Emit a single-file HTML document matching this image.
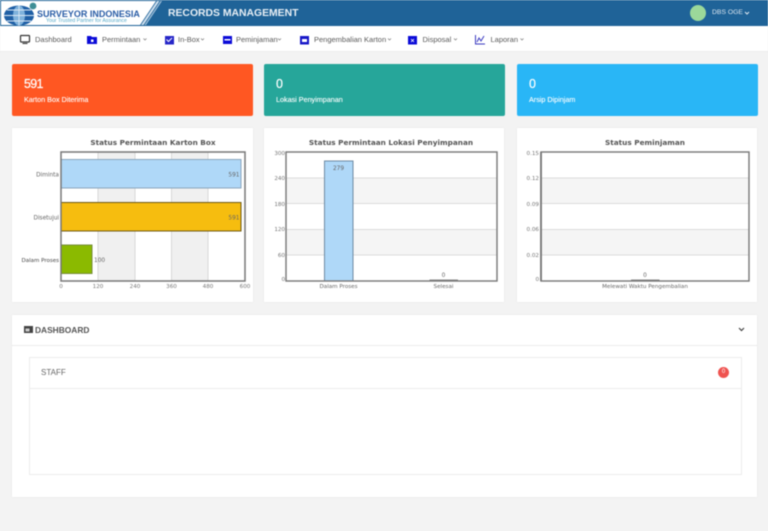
<!DOCTYPE html>
<html>
<head>
<meta charset="utf-8">
<style>
html,body{margin:0;padding:0;width:768px;height:531px;overflow:hidden;background:#f3f3f3;font-family:"Liberation Sans",sans-serif}
.a{position:absolute}
#root{position:relative;width:768px;height:531px;filter:blur(.45px);overflow:hidden}
.nav{position:absolute;top:33.500px;font-size:7.500px;line-height:11px;color:#5a5a5a;white-space:nowrap}
.stat{position:absolute;top:64px;height:52px;width:241px;border-radius:2px;color:#fff}
.stat b{position:absolute;left:12px;top:13px;font-size:12.500px;font-weight:400;line-height:15px;letter-spacing:-.7px;-webkit-text-stroke:.2px #fff}
.stat span{position:absolute;left:12px;top:29.500px;font-size:7.200px;line-height:11px;-webkit-text-stroke:.1px #fff}
.card{position:absolute;top:128px;height:174px;background:#fff;box-shadow:0 0 2px rgba(0,0,0,.06)}
svg text{font-family:"DejaVu Sans",sans-serif}
</style>
</head>
<body>
<div id="root">
<svg class="a" style="left:0;top:0" width="768" height="52">
<rect width="768" height="26" fill="#1f6398"/>
<rect y="26" width="768" height="25" fill="#fff"/>
<rect y="51" width="768" height="1" fill="#ececec"/>
<polygon points="1,1 156,1 140,25 1,25" fill="#fff"/>
<polygon points="157,1 159.500,1 143.500,25 141,25" fill="#cfe0ee"/>
<polygon points="160.500,1 162,1 146,25 144.500,25" fill="#9fc0da"/>
<ellipse cx="19" cy="15.500" rx="15" ry="10" fill="#1f5fa5"/>
<ellipse cx="19" cy="15.500" rx="6" ry="10" fill="#7fb2dc"/>
<path d="M4 15.500H34M7 10H31M7 21H31M19 5.500V25.500" stroke="#dbe8f4" stroke-width=".9" fill="none"/>
<circle cx="33" cy="6" r="3.400" fill="#3e8e96"/>
</svg>
<div class="a" style="left:37px;top:7.500px;font-size:9px;font-weight:700;color:#2a5da6;line-height:12px;white-space:nowrap">SURVEYOR INDONESIA</div>
<div class="a" style="left:46px;top:17.500px;font-size:5.200px;color:#55a8c8;line-height:6px;white-space:nowrap">Your Trusted Partner for Assurance</div>
<div class="a" style="left:168px;top:6.500px;font-size:10.400px;font-weight:700;color:#e8eff5;line-height:14px;white-space:nowrap">RECORDS MANAGEMENT</div>
<div class="a" style="left:690px;top:5px;width:16px;height:16px;border-radius:50%;background:#9bd89a"></div>
<div class="a" style="left:712px;top:8px;font-size:6.800px;color:#dbe6f0;line-height:10px;white-space:nowrap">DBS OGE</div>
<svg class="a" style="left:0;top:0" width="768" height="52" fill="none">
<path d="M745 12l2 2 2-2" stroke="#dfe8f0" stroke-width="1"/>
<rect x="20.500" y="35.500" width="9" height="6.500" rx=".6" stroke="#333" stroke-width="1.200"/>
<path d="M22.500 43.500h5" stroke="#333"/>
<path d="M87 36h4l1 1h5v7H87z" fill="#0b0bd8"/><rect x="91" y="39.500" width="2.500" height="2.500" fill="#fff"/>
<path d="M165 36h9v8.500h-9z" fill="#2626c8"/><path d="M166.500 39.500l2 2 3.500-3.500" stroke="#fff"/>
<path d="M223 36h9v8h-9z" fill="#0b0bd8"/><rect x="224.500" y="39" width="6" height="1.500" fill="#fff"/>
<path d="M300 36h9v8.500h-9z" fill="#1818c8"/><rect x="302" y="39" width="5" height="3" fill="#fff"/>
<path d="M408 36h9v8.500h-9z" fill="#0b0bd8"/><path d="M411 39l3 3M414 39l-3 3" stroke="#fff" stroke-width=".8"/>
<path d="M475.500 35v9h9.500" stroke="#3a3ac0"/><path d="M477 42l2-4 2 3 3-5" stroke="#3a3ac0"/>
<g stroke="#777" stroke-width=".7">
<path d="M143.500 38.500l1.500 1.500 1.500-1.500"/><path d="M201 38.500l1.500 1.500 1.500-1.500"/><path d="M278 38.500l1.500 1.500 1.500-1.500"/><path d="M388 38.500l1.500 1.500 1.500-1.500"/><path d="M454 38.500l1.500 1.500 1.500-1.500"/><path d="M520.500 38.500l1.500 1.500 1.500-1.500"/>
</g>
</svg>
<div class="nav" style="left:35px">Dashboard</div>
<div class="nav" style="left:102px">Permintaan</div>
<div class="nav" style="left:178px">In-Box</div>
<div class="nav" style="left:236px">Peminjaman</div>
<div class="nav" style="left:314px">Pengembalian Karton</div>
<div class="nav" style="left:422.500px">Disposal</div>
<div class="nav" style="left:490.500px">Laporan</div>

<div class="stat" style="left:12px;background:#ff5722"><b>591</b><span>Karton Box Diterima</span></div>
<div class="stat" style="left:264px;background:#26a69a"><b>0</b><span>Lokasi Penyimpanan</span></div>
<div class="stat" style="left:517px;background:#29b6f6"><b>0</b><span>Arsip Dipinjam</span></div>

<div class="card" style="left:12px;width:241px"></div>
<div class="card" style="left:264px;width:240px"></div>
<div class="card" style="left:517px;width:240px"></div>

<svg class="a" style="left:0;top:125px" width="768" height="180" font-size="5.800" fill="#666">
<!-- chart 1 -->
<text x="153" y="20" font-size="7.300" font-weight="700" text-anchor="middle" fill="#555">Status Permintaan Karton Box</text>
<rect x="98" y="27" width="37" height="129" fill="#f0f0f0"/><rect x="171.500" y="27" width="36.500" height="129" fill="#f0f0f0"/>
<path d="M98 27v129M135 27v129M171.500 27v129M208 27v129" stroke="#d8d8d8"/>
<rect x="61" y="34.500" width="180" height="28.500" fill="#afd8f8" stroke="#8aa6bd"/>
<rect x="61" y="77.500" width="180" height="28.500" fill="#f6bd0f" stroke="#6f5a14"/>
<rect x="61" y="120" width="31" height="28.500" fill="#8bba00" stroke="#778e3a"/>
<rect x="61" y="27" width="184" height="129" fill="none" stroke="#777" stroke-width="1.500"/>
<g text-anchor="end">
<text x="59" y="51.500">Diminta</text><text x="59" y="94.500">Disetujui</text><text x="59" y="137" fill="#444" font-size="5.500">Dalam Proses</text>
<text x="239.500" y="51.500">591</text><text x="239.500" y="94.500">591</text>
</g>
<text x="94" y="137">100</text>
<g text-anchor="middle" font-size="5.600" fill="#777">
<text x="61" y="163">0</text><text x="98" y="163">120</text><text x="135" y="163">240</text><text x="171.500" y="163">360</text><text x="208" y="163">480</text><text x="245" y="163">600</text>
</g>
<!-- chart 2 -->
<text x="391" y="20" font-size="7.300" font-weight="700" text-anchor="middle" fill="#555">Status Permintaan Lokasi Penyimpanan</text>
<rect x="286" y="53" width="211" height="25.800" fill="#f5f5f5"/><rect x="286" y="104.500" width="211" height="25.500" fill="#f5f5f5"/>
<path d="M286 53h211M286 78.500h211M286 104.500h211M286 130h211" stroke="#dcdcdc"/>
<rect x="324.500" y="36" width="28.500" height="120" fill="#afd8f8" stroke="#6e8ba3"/>
<rect x="429.500" y="154.500" width="28.500" height="1.500" fill="#888"/>
<rect x="286" y="27" width="211" height="129" fill="none" stroke="#777" stroke-width="1.400"/>
<text x="338.500" y="45" text-anchor="middle">279</text>
<text x="443.500" y="152" text-anchor="middle">0</text>
<g text-anchor="end" font-size="5.600" fill="#777">
<text x="285" y="156">0</text><text x="285" y="132">60</text><text x="285" y="106">120</text><text x="285" y="81">180</text><text x="285" y="55">240</text><text x="285" y="30">300</text>
</g>
<g text-anchor="middle" font-size="5.600" fill="#666"><text x="338.500" y="163">Dalam Proses</text><text x="443.500" y="163">Selesai</text></g>
<!-- chart 3 -->
<text x="645" y="20" font-size="7.300" font-weight="700" text-anchor="middle" fill="#555">Status Peminjaman</text>
<rect x="541" y="53" width="208" height="25.800" fill="#f5f5f5"/><rect x="541" y="104.500" width="208" height="25.500" fill="#f5f5f5"/>
<path d="M541 53h208M541 78.500h208M541 104.500h208M541 130h208" stroke="#dcdcdc"/>
<rect x="631" y="154.500" width="28.500" height="1.500" fill="#888"/>
<rect x="541" y="27" width="208" height="129" fill="none" stroke="#777" stroke-width="1.400"/>
<path d="M541 27v129" stroke="#777" stroke-width="1.800"/>
<text x="645" y="152" text-anchor="middle">0</text>
<g text-anchor="end" font-size="5.600" fill="#777">
<text x="539" y="156">0</text><text x="539" y="132">0.02</text><text x="539" y="106">0.06</text><text x="539" y="81">0.09</text><text x="539" y="55">0.12</text><text x="539" y="30">0.15</text>
</g>
<text x="645" y="163" text-anchor="middle" font-size="5.600">Melewati Waktu Pengembalian</text>
</svg>

<div class="a" style="left:12px;top:315px;width:745px;height:182px;background:#fff;box-shadow:0 0 2px rgba(0,0,0,.06)"></div>
<div class="a" style="left:12px;top:345px;width:745px;height:1px;background:#ececec"></div>
<div class="a" style="left:35px;top:323.500px;font-size:8.400px;font-weight:700;color:#555;line-height:13px;white-space:nowrap">DASHBOARD</div>
<svg class="a" style="left:0;top:310px" width="768" height="60" fill="none">
<rect x="24" y="16" width="9" height="7" fill="#444"/><rect x="25.500" y="18.500" width="4" height="3" fill="#ccc"/>
<path d="M739 18l2.500 2.500 2.500-2.500" stroke="#444" stroke-width="1.200"/>
</svg>
<div class="a" style="left:29px;top:357px;width:711px;height:116px;border:1px solid #ececec;background:#fff"></div>
<div class="a" style="left:30px;top:388px;width:711px;height:1px;background:#ececec"></div>
<div class="a" style="left:41px;top:366px;font-size:8px;color:#666;line-height:13px">STAFF</div>
<div class="a" style="left:718px;top:367px;width:11px;height:11px;border-radius:50%;background:#ef5350;color:#fff;font-size:6px;line-height:11px;text-align:center">0</div>
</div>
</body>
</html>
